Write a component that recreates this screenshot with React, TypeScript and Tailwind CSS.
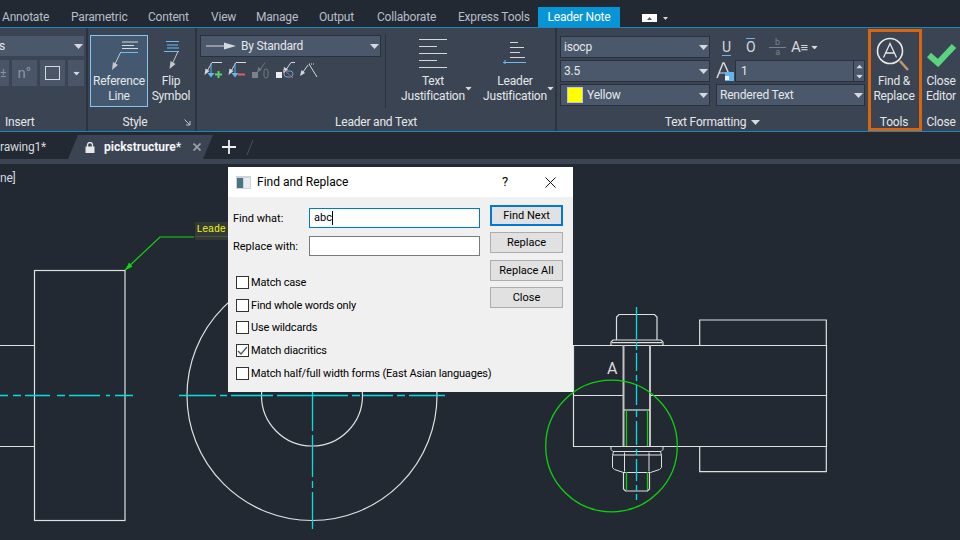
import type { ReactNode } from "react"

const tabs = [
  { label: "Annotate", w: "w-[69px]" },
  { label: "Parametric", w: "w-[77px]" },
  { label: "Content", w: "w-[63px]" },
  { label: "View", w: "w-[45px]" },
  { label: "Manage", w: "w-[63px]" },
  { label: "Output", w: "w-[58px]" },
  { label: "Collaborate", w: "w-[81px]" },
  { label: "Express Tools", w: "w-[80px]" },
]

const checks = [
  { label: "Match case", h: "h-[23px]", on: false },
  { label: "Find whole words only", h: "h-[22px]", on: false },
  { label: "Use wildcards", h: "h-[23px]", on: false },
  { label: "Match diacritics", h: "h-[23px]", on: true },
  { label: "Match half/full width forms (East Asian languages)", h: "h-[13px]", on: false },
]

const dialogButtons = [
  { label: "Replace", mt: "mt-[6px]" },
  { label: "Replace All", mt: "mt-[7px]" },
  { label: "Close", mt: "mt-[6px]" },
]

function Caret({ className = "" }: { className?: string }) {
  return (
    <svg width="9" height="5" viewBox="0 0 9 5" className={className}>
      <path d="M0 0h9L4.5 5z" fill="#d5d9de" />
    </svg>
  )
}

function Select({ className = "", children }: { className?: string; children?: ReactNode }) {
  return (
    <div className={`flex h-[22px] items-center justify-between border border-[#2a313c] bg-[#4b586b] pl-[3px] pr-[1px] text-[#e4e7ea] ${className}`}>
      <div className="flex items-center">{children}</div>
      <Caret />
    </div>
  )
}

function PanelLabel({ className = "", children }: { className?: string; children: ReactNode }) {
  return <div className={`flex h-[18px] items-center justify-center text-[#e4e7ea] ${className}`}>{children}</div>
}

function BigLabel({ lines }: { lines: string[] }) {
  return (
    <div className="text-center leading-[15px] text-[#e4e7ea]">
      {lines.map((l) => (
        <div key={l} className="whitespace-nowrap">{l}</div>
      ))}
    </div>
  )
}

function LeaderIcon({ tail }: { tail?: ReactNode }) {
  return (
    <svg width="20" height="18" viewBox="0 0 20 18">
      <path d="M8 1.500L2.500 11M8 1.500h10" stroke="#d5d8dc" fill="none" />
      <path d="M.5 14l1-6.500 4 2.500z" fill="#d5d8dc" />
      {tail}
    </svg>
  )
}

function Ribbon() {
  return (
    <div className="flex h-[104px] border-b border-[#1c86bd] bg-[#3b4453]">
      {/* Insert */}
      <div className="flex w-[88px] shrink-0 flex-col border-r-2 border-[#2c333e]">
        <div className="h-[85px] pt-[8px]">
          <div className="flex h-[20px] w-[84px] items-center justify-between bg-[#4b586b] pr-[1px] text-[#e4e7ea]">
            <span className="-ml-[1px]">s</span>
            <Caret />
          </div>
          <div className="mt-[4px] flex h-[26px] w-[84px] gap-[3px]">
            <div className="flex w-[9px] items-center overflow-hidden bg-[#4a5567] text-[#8c939c]">±</div>
            <div className="flex w-[25px] items-center justify-center bg-[#4a5567] text-[15px] text-[#8c939c]">n°</div>
            <div className="flex w-[26px] items-center justify-center bg-[#4a5567]">
              <div className="h-[14px] w-[15px] border border-[#d5d8dc]" />
            </div>
            <div className="flex w-[16px] items-center justify-center bg-[#4a5567]">
              <Caret className="scale-75" />
            </div>
          </div>
        </div>
        <PanelLabel className="justify-start pl-[5px]">Insert</PanelLabel>
      </div>

      {/* Style */}
      <div className="relative flex w-[109px] shrink-0 flex-col border-r-2 border-[#2c333e]">
        <div className="flex h-[85px] pt-[7px]">
          <div className="ml-[2px] flex h-[72px] w-[58px] flex-col items-center justify-between border border-[#86c5ee] bg-[#445970] pb-[2px]">
            <svg width="38" height="34" viewBox="0 0 38 34" className="mt-[3px]">
              <path d="M23 3.500h16M23 7h12M23 10h16" stroke="#d5d8dc" transform="translate(-1 -.5)" />
              <path d="M21 13.500h20" stroke="#6cbcf2" transform="translate(-1 0)" />
              <path d="M20.500 13.500L14 27" stroke="#c5c8cc" />
              <path d="M12 31l1-8 5 3z" fill="#c5c8cc" />
            </svg>
            <BigLabel lines={["Reference", "Line"]} />
          </div>
          <div className="flex h-[71px] w-[46px] flex-col items-center justify-between pb-[2px]">
            <svg width="20" height="34" viewBox="0 0 20 34" className="mt-[3px]">
              <path d="M5 3.500h13M6 7h11M6 10h12M3 13.500h15" stroke="#6cbcf2" />
              <path d="M17 13.500l-6 13" stroke="#c5c8cc" />
              <path d="M8.500 31l1-8 5 3z" fill="#c5c8cc" />
            </svg>
            <BigLabel lines={["Flip", "Symbol"]} />
          </div>
        </div>
        <PanelLabel className="pr-[13px]">Style</PanelLabel>
        <svg width="7" height="7" viewBox="0 0 7 7" className="absolute bottom-[5px] right-[4px]">
          <path d="M.5.500l5 5M6 2v4H2" stroke="#c5c8cc" fill="none" />
        </svg>
      </div>

      {/* Leader and Text */}
      <div className="flex w-[360px] shrink-0 flex-col border-r-2 border-[#2c333e]">
        <div className="flex h-[85px]">
          <div className="w-[188px] pl-[3px] pt-[7px]">
            <div className="flex h-[22px] w-[181px] items-center justify-between border border-[#2a313c] bg-[#4b586b] pl-[5px] pr-[1px] text-[#e4e7ea]">
              <div className="flex items-center gap-[5px]">
                <svg width="30" height="8" viewBox="0 0 30 8">
                  <path d="M0 4h20" stroke="#d5d8dc" />
                  <path d="M18 .500L30 4l-12 3.500z" fill="#d5d8dc" />
                </svg>
                <span>By Standard</span>
              </div>
              <Caret />
            </div>
            <div className="mt-[4px] flex gap-[4px] pl-[4px]">
              <LeaderIcon
                tail={
                  <>
                    <path d="M7 2v11" stroke="#62b5ee" />
                    <path d="M3.500 12h7L7 16.500z" fill="#62b5ee" />
                    <path d="M11 13.500h7M14.500 10v7" stroke="#52d46f" strokeWidth="2" />
                  </>
                }
              />
              <LeaderIcon
                tail={
                  <>
                    <path d="M7 2v11" stroke="#62b5ee" />
                    <path d="M3.500 12h7L7 16.500z" fill="#62b5ee" />
                    <path d="M10 13.500h7" stroke="#e0605f" strokeWidth="2" />
                  </>
                }
              />
              <svg width="20" height="18" viewBox="0 0 20 18">
                <path d="M13 1.500L7.500 9.500" stroke="#6f7680" />
                <path d="M5 12l1-6 4 2.500z" fill="#6f7680" />
                <rect x="0" y="11" width="6" height="6" fill="#7b828c" />
                <rect x="12" y="8" width="4" height="9" rx="2" stroke="#6f7680" fill="none" />
              </svg>
              <svg width="20" height="18" viewBox="0 0 20 18">
                <path d="M15 1.500L9.500 9.500M15 1.500h4" stroke="#d5d8dc" />
                <path d="M7 12l1-6 4 2.500z" fill="#d5d8dc" />
                <rect x="0" y="11" width="6" height="6" fill="#ececec" />
                <rect x="8" y="10" width="9" height="6" rx="3" stroke="#5aa9e6" fill="none" />
                <path d="M8 9l9 8" stroke="#e0605f" />
              </svg>
              <svg width="20" height="18" viewBox="0 0 20 18">
                <path d="M9 3h5" stroke="#d5d8dc" strokeDasharray="1 1" />
                <path d="M9 3l8 13M8 4L3 11" stroke="#d5d8dc" fill="none" />
                <path d="M0 15l1.500-6 3.500 3z" fill="#d5d8dc" />
              </svg>
            </div>
          </div>
          <div className="mt-[6px] h-[74px] w-px bg-[#2c333e]" />
          <div className="relative flex h-[76px] w-[94px] flex-col items-center justify-between pt-[11px]">
            <svg width="28" height="30" viewBox="0 0 28 30">
              <path d="M0 .500h28M0 7.500h18M0 14.500h28M0 21.500h18M0 28.500h28" stroke="#d5d8dc" />
            </svg>
            <BigLabel lines={["Text", "Justification"]} />
            <Caret className="absolute bottom-[13px] right-[7px] scale-75" />
          </div>
          <div className="relative flex h-[76px] w-[70px] flex-col items-center justify-between pt-[14px]">
            <svg width="26" height="22" viewBox="0 0 26 22">
              <path d="M8 .500h8M8 5.500h14M8 10.500h10M8 15.500h15" stroke="#d5d8dc" />
              <path d="M1 20.500h23M3 18v5" stroke="#6cbcf2" />
            </svg>
            <BigLabel lines={["Leader", "Justification"]} />
            <Caret className="absolute bottom-[13px] -right-[5px] scale-75" />
          </div>
        </div>
        <PanelLabel>Leader and Text</PanelLabel>
      </div>

      {/* Text Formatting */}
      <div className="flex w-[311px] shrink-0 flex-col">
        <div className="flex h-[85px] gap-[6px] pl-[3px] pt-[8px]">
          <div className="flex w-[150px] flex-col gap-[2px]">
            <Select>isocp</Select>
            <Select>3.5</Select>
            <Select className="pl-[6px]">
              <div className="h-[16px] w-[16px] border border-[#c8c8c8] bg-[#ffff00]" />
              <span className="ml-[4px]">Yellow</span>
            </Select>
          </div>
          <div className="flex w-[149px] flex-col gap-[2px]">
            <div className="flex h-[22px] items-center pl-[6px] text-[#d5d8dc]">
              <span className="w-[24px] text-[14px] leading-[14px]">
                <span className="border-b border-[#62b5ee]">U</span>
              </span>
              <span className="w-[23px] text-[14px] leading-[14px]">
                <span className="border-t border-[#62b5ee]">O</span>
              </span>
              <span className="w-[17px] text-center text-[9px] leading-[9px] text-[#7b828c]">
                <span className="block border-b border-[#7b828c]">b</span>
                <span className="block">a</span>
              </span>
              <span className="ml-[5px] text-[15px] leading-[15px]">A</span>
              <span className="text-[13px] leading-[13px]">≡</span>
              <Caret className="ml-[2px] scale-75" />
            </div>
            <div className="flex h-[22px] items-center">
              <svg width="19" height="20" viewBox="0 0 19 20" className="shrink-0">
                <path d="M1 17L7 2h1l5 11" stroke="#d5d8dc" strokeWidth="1.500" fill="none" />
                <path d="M3 12h7" stroke="#d5d8dc" />
                <rect x="9" y="11" width="9" height="9" fill="#62b5ee" />
                <rect x="9" y="15" width="4" height="4" fill="#f0f0f0" />
              </svg>
              <div className="flex h-[22px] flex-1 items-center border border-[#2a313c] bg-[#4b586b] pl-[5px] text-[#e4e7ea]">1</div>
              <div className="flex h-[22px] w-[11px] flex-col border-y border-r border-[#2a313c]">
                <div className="flex flex-1 items-center justify-center bg-[#4b586b]">
                  <Caret className="rotate-180 scale-75" />
                </div>
                <div className="flex flex-1 items-center justify-center bg-[#4b586b]">
                  <Caret className="scale-75" />
                </div>
              </div>
            </div>
            <Select>Rendered Text</Select>
          </div>
        </div>
        <PanelLabel className="gap-[5px]">
          Text Formatting
          <Caret />
        </PanelLabel>
      </div>

      {/* Tools */}
      <div className="mt-px flex h-[102px] w-[54px] shrink-0 flex-col items-center border-[3px] border-[#d9660c] pr-[2px]">
        <svg width="38" height="38" viewBox="0 0 38 38" className="mt-[4px] ml-[4px] shrink-0 self-start">
          <circle cx="15" cy="15" r="12.500" stroke="#e8e8e8" strokeWidth="1.600" fill="none" />
          <path d="M25 25l8 9" stroke="#c4976a" strokeWidth="2.500" />
          <path d="M8.500 21.500L15 7.500l6.500 14M11 17h8" stroke="#e8e8e8" strokeWidth="1.300" fill="none" />
        </svg>
        <BigLabel lines={["Find &", "Replace"]} />
        <PanelLabel className="mt-[9px]">Tools</PanelLabel>
      </div>

      {/* Close */}
      <div className="flex w-[38px] shrink-0 flex-col items-center pt-[15px]">
        <svg width="31" height="24" viewBox="0 0 31 24" className="shrink-0">
          <path d="M3 12l9 8L28 3" stroke="#5bd480" strokeWidth="6" fill="none" />
        </svg>
        <div className="mt-[7px]">
          <BigLabel lines={["Close", "Editor"]} />
        </div>
        <PanelLabel className="mt-[9px]">Close</PanelLabel>
      </div>
    </div>
  )
}

function FileTabs() {
  return (
    <div className="flex h-[32px] flex-col">
      <div className="flex h-[27px] items-end">
        <div className="flex h-[24px] w-[68px] items-center text-[#d5d8dc]">rawing1*</div>
        <div className="flex h-[24px] w-[145px] items-center bg-[#3b4453] pl-[17px] [clip-path:polygon(10px_0,100%_0,135px_100%,0_100%)]">
          <svg width="10" height="11" viewBox="0 0 10 11" className="shrink-0">
            <path d="M2.500 5V3a2.500 2.500 0 015 0v2" stroke="#e8e8e8" strokeWidth="1.300" fill="none" />
            <rect x="0.500" y="4.500" width="9" height="6.500" fill="#e8e8e8" />
          </svg>
          <span className="ml-[9px] w-[80px] whitespace-nowrap font-bold tracking-normal text-[#f4f5f6]">pickstructure*</span>
          <svg width="8" height="8" viewBox="0 0 8 8" className="ml-[9px] shrink-0">
            <path d="M.5.500l7 7M7.500.500l-7 7" stroke="#9aa0a8" strokeWidth="1.800" />
          </svg>
        </div>
        <svg width="48" height="24" viewBox="0 0 48 24">
          <path d="M16 5v14M9 12h14" stroke="#f0f0f0" strokeWidth="1.800" />
          <path d="M40 5l-6 15" stroke="#4a5260" />
        </svg>
      </div>
      <div className="h-[5px] bg-[#3b4453]" />
    </div>
  )
}

function Drawing() {
  const white = "#e0e0e0"
  return (
    <svg viewBox="0 164 960 376" className="block h-full w-full" fill="none">
      <g stroke={white} strokeWidth="1.200">
        <path d="M0 345.500h35M0 446.500h35" />
        <rect x="34.500" y="270.500" width="90.500" height="250" />
        <circle cx="312" cy="395.500" r="125" />
        <circle cx="312" cy="395.500" r="50.500" />
        <path d="M573.500 345.500h253v101h-253zM573.500 395.500h49.500M650 395.500h176.500" />
        <path d="M699.700 345V320h126.600v25M699.700 446.500V471.700h126.600V446.500" />
        <path d="M623.500 345v101M650 345v101" stroke="#c2c2c2" strokeWidth="2" />
        <path d="M624 410h26" />
        <path d="M616.500 340v-23l2.500-2.500h35.500l2.500 2.500v23M611 345v-3l2-2h48l2 2v3M612 342.700h50" />
        <path d="M611 446.500v3l2 2h48l2-2v-3M613.500 451.500l-1 4v12l2 2 9 3h27l9-3 2-2v-12l-1-4M624.500 452.500v19M649 452.500v19M613 455h49" strokeWidth="1" />
        <path d="M623.500 472v17l2 2h22l2-2v-17" />
      </g>
      <g stroke="#0ed00e" strokeWidth="1.300">
        <path d="M626.500 410v36M647.500 410v36M626.500 472v18M647.500 472v18" />
        <circle cx="611.500" cy="446" r="65.800" />
      </g>
      <path d="M194 237h-34l-35 33" stroke="#0ed80e" strokeWidth="1.200" />
      <path d="M125 270.500l4-8 3.500 4z" fill="#0ed80e" />
      <g stroke="#00e0e0" strokeWidth="1.300">
        <path d="M0 395.500h8M13 395.500h8M25 395.500h25M57 395.500h8M69 395.500h31M106 395.500h4M115 395.500h18" />
        <path d="M179 395.500h37M220 395.500h7M231 395.500h31M262 395.500h11M277 395.500h71M352 395.500h8M363 395.500h30M397 395.500h8M409 395.500h36" />
        <path d="M312.500 392v39M312.500 435v42M312.500 481v7M312.500 492v37" />
        <path d="M636.500 307v32M636.500 342v8M636.500 353v18M636.500 375v6M636.500 385v20M636.500 409v8M636.500 421v24M636.500 449v6M636.500 459v22M636.500 485v6M636.500 494v6" />
      </g>
      <rect x="195" y="222" width="33" height="18" fill="#333a33" />
      <path d="M195 236.500h33" stroke="#4a524a" />
      <text x="196.500" y="232" fontFamily="'Liberation Mono', monospace" fontSize="10" fill="#f2f21e">Leade</text>
      <text x="612" y="374" textAnchor="middle" fontFamily="Roboto, sans-serif" fontSize="16" fill="#d9d9d9">A</text>
    </svg>
  )
}

function Dialog() {
  return (
    <div className="absolute left-[228px] top-[3px] h-[225px] w-[345px] text-[11px] tracking-normal text-black">
      <div className="flex h-[30px] items-center bg-white pl-[8px]">
        <svg width="15" height="13" viewBox="0 0 15 13">
          <rect width="15" height="13" fill="#cfd3d6" />
          <rect x="1" y="2" width="6" height="10" fill="#4a7484" />
          <rect x="8" y="2" width="6" height="10" fill="#e8ecee" />
        </svg>
        <span className="ml-[6px] flex-1 text-[12px]">Find and Replace</span>
        <span className="w-[20px] text-center text-[13px]">?</span>
        <svg width="11" height="11" viewBox="0 0 11 11" className="ml-[30px] mr-[17px]">
          <path d="M.5.500l10 10M10.500.500l-10 10" stroke="#111" />
        </svg>
      </div>
      <div className="flex h-[195px] bg-[#f0f0f0] pl-[5px]">
        <div className="w-[257px] shrink-0 pt-[11px]">
          <div className="flex h-[20px] items-center">
            <span className="w-[76px] pt-[2px]">Find what:</span>
            <div className="flex h-[20px] w-[171px] items-center border border-[#0078d7] bg-white pl-[4px]">
              abc<span className="h-[14px] w-px bg-black" />
            </div>
          </div>
          <div className="mt-[8px] flex h-[20px] items-center">
            <span className="w-[76px] pt-[2px]">Replace with:</span>
            <div className="h-[20px] w-[171px] border border-[#7a7a7a] bg-white" />
          </div>
          <div className="mt-[20px] pl-[3px]">
            {checks.map((c) => (
              <div key={c.label} className={`flex items-start ${c.h}`}>
                <div className="flex h-[13px] w-[13px] shrink-0 items-center justify-center border border-[#333] bg-white">
                  {c.on && (
                    <svg width="11" height="11" viewBox="0 0 11 11">
                      <path d="M1 6l3 3 6-7" stroke="#555" strokeWidth="1.300" fill="none" />
                    </svg>
                  )}
                </div>
                <span className="ml-[2px] h-[13px] whitespace-nowrap leading-[13px] tracking-[-0.17px]">{c.label}</span>
              </div>
            ))}
          </div>
        </div>
        <div className="flex w-[73px] flex-col pt-[8px]">
          <div className="flex h-[21px] items-center justify-center border-2 border-[#0078d7] bg-[#e1e1e1] pt-[2px]">Find Next</div>
          {dialogButtons.map((b) => (
            <div key={b.label} className={`flex h-[21px] items-center justify-center border border-[#adadad] bg-[#e1e1e1] pt-[2px] ${b.mt}`}>
              {b.label}
            </div>
          ))}
        </div>
      </div>
    </div>
  )
}

export default function App() {
  return (
    <div className="flex h-[540px] w-[960px] flex-col overflow-hidden bg-[#222933] font-['Roboto',sans-serif] text-[12px] tracking-[-0.2px]">
      <div className="flex h-[28px] shrink-0 items-end border-b border-[#1c86bd] pl-[2px] text-[#b7bec7]">
        {tabs.map((t) => (
          <div key={t.label} className={`flex h-[20px] shrink-0 items-center whitespace-nowrap ${t.w}`}>{t.label}</div>
        ))}
        <div className="flex h-[20px] w-[82px] shrink-0 items-center justify-center bg-[#0696d7] text-white">Leader Note</div>
        <div className="ml-[22px] flex h-[20px] items-center gap-[6px] pt-[2px]">
          <div className="flex h-[8px] w-[15px] items-center justify-center bg-white">
            <svg width="5" height="3" viewBox="0 0 5 3">
              <path d="M0 3l2.500-3L5 3z" fill="#555" />
            </svg>
          </div>
          <svg width="5" height="3" viewBox="0 0 5 3">
            <path d="M0 0h5L2.500 3z" fill="#d5d8dc" />
          </svg>
        </div>
      </div>
      <Ribbon />
      <FileTabs />
      <div className="relative min-h-0 flex-1">
        <Drawing />
        <span className="absolute left-0 top-[5px] text-[#d5d8dc]">ne]</span>
        <Dialog />
      </div>
    </div>
  )
}
